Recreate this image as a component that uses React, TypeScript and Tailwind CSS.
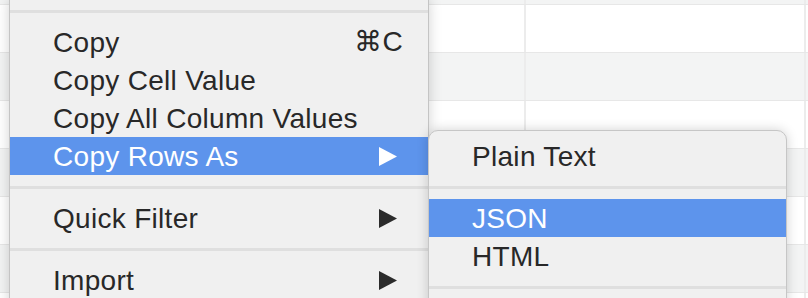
const rows = Array.from({ length: 8 });

function Arrow({ white }: { white?: boolean }) {
  return (
    <svg width="18" height="19" viewBox="0 0 18 19" className="shrink-0">
      <polygon points="0,0 18,9.5 0,19" fill={white ? "#ffffff" : "#2b2b2b"} />
    </svg>
  );
}

function Sep() {
  return (
    <div className="h-[24px] flex items-center">
      <div className="h-[3px] w-full bg-[#dfdfdf]" />
    </div>
  );
}

function Item({
  label,
  active,
  right,
  arrow,
}: {
  label: string;
  active?: boolean;
  right?: string;
  arrow?: boolean;
}) {
  return (
    <div
      className={
        "h-[38px] flex items-center pl-[43px] " +
        (active ? "bg-[#5d94ec] text-white" : "text-[#282828]")
      }
    >
      <span className="flex-1 pt-[1px]">{label}</span>
      {right && <span className="pr-[25px]">{right}</span>}
      {arrow && (
        <span className="pr-[31px] flex items-center">
          <Arrow white={active} />
        </span>
      )}
    </div>
  );
}

export default function App() {
  return (
    <div
      className="relative w-[808px] h-[298px] overflow-hidden bg-white text-[28px] leading-none tracking-[0.3px]"
      style={{ fontFamily: '"Liberation Sans", "DejaVu Sans", sans-serif' }}
    >
      {/* table behind the menu */}
      <div className="-mt-[43px]">
        {rows.map((_, i) => (
          <div
            key={i}
            className={
              "h-[48px] border-b border-[#e7e7e7] flex " +
              (i % 2 === 0 ? "bg-[#f3f4f4]" : "bg-white")
            }
          >
            <div className="w-[526px] border-r-2 border-[#ececec]" />
            <div className="w-[280px] border-r-2 border-[#ececec]" />
            <div className="flex-1" />
          </div>
        ))}
      </div>

      {/* main context menu */}
      <div className="absolute left-[9px] top-[-1px] w-[420px] h-[320px] bg-[#f0f0f0] border-l border-r border-[#c4c4c4] shadow-[0_0_12px_rgba(0,0,0,0.18)]">
        <Sep />
        <Item label="Copy" right="⌘C" />
        <Item label="Copy Cell Value" />
        <Item label="Copy All Column Values" />
        <Item label="Copy Rows As" arrow active />
        <Sep />
        <Item label="Quick Filter" arrow />
        <Sep />
        <Item label="Import" arrow />
      </div>

      {/* submenu */}
      <div className="absolute left-[428px] top-[130px] w-[359px] h-[200px] bg-[#f0f0f0] border border-[#c6c6c6] rounded-t-[10px] pt-[6px] shadow-[0_0_12px_rgba(0,0,0,0.18)]">
        <Item label="Plain Text" />
        <Sep />
        <Item label="JSON" active />
        <Item label="HTML" />
        <Sep />
      </div>
    </div>
  );
}
